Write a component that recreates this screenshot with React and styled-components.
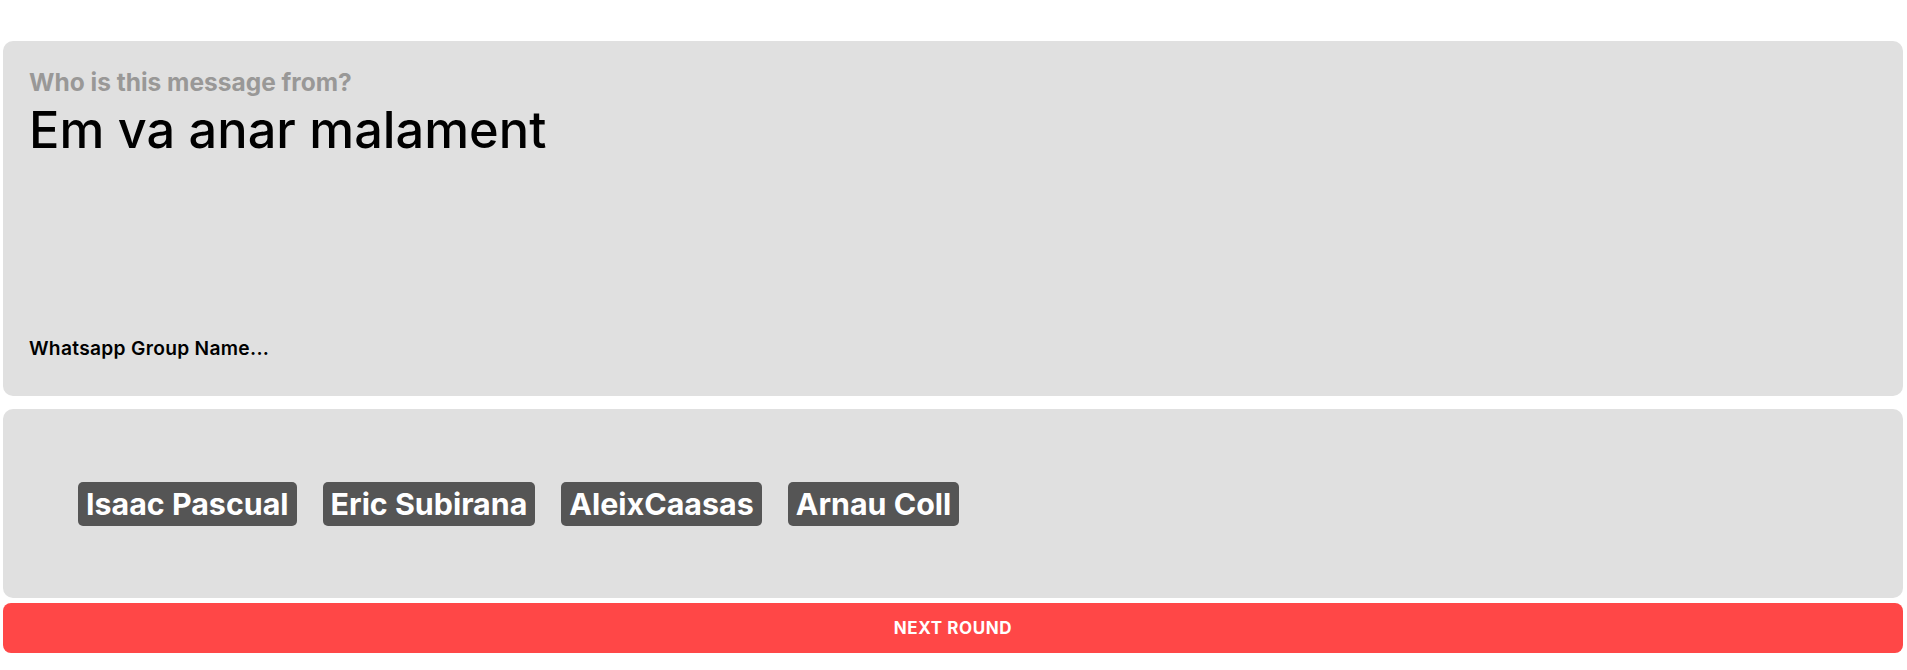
import React from 'react';
import styled, { createGlobalStyle } from "styled-components";

const GlobalStyle = createGlobalStyle`
  * {
    box-sizing: border-box;
  }
  body {
    margin: 0;
    background: #ffffff;
    font-family: Inter, "Noto Sans", sans-serif;
  }
`;

export default function App() {
    const players = ["Isaac Pascual", "Eric Subirana", "AleixCaasas", "Arnau Coll"];

    return (
        <>
            <GlobalStyle />
            <Page>
                <MessageCard>
                    <div>
                        <Question>Who is this message from?</Question>
                        <Message>Em va anar malament</Message>
                    </div>
                    <GroupName>Whatsapp Group Name...</GroupName>
                </MessageCard>
                <PlayersCard>
                    {players.map((name) => (
                        <PlayerTag key={name}>{name}</PlayerTag>
                    ))}
                </PlayersCard>
                <NextButton>NEXT ROUND</NextButton>
            </Page>
        </>
    );
}

const Page = styled.main`
    display: flex;
    flex-direction: column;
    padding: 41px 4px 0 3px;
`;

const MessageCard = styled.section`
    height: 355px;
    padding: 27px 26px 36px;
    display: flex;
    flex-direction: column;
    justify-content: space-between;
    background-color: #e0e0e0;
    border-radius: 10px;
`;

const Question = styled.h3`
    margin: 0;
    font-size: 24.5px;
    line-height: 28px;
    font-weight: 700;
    color: #999897;
`;

const Message = styled.h1`
    margin: 5px 0 0;
    font-size: 50.5px;
    line-height: 58px;
    font-weight: 500;
    color: #000;
`;

const GroupName = styled.p`
    margin: 0;
    font-size: 19.2px;
    line-height: 24px;
    font-weight: 600;
    letter-spacing: 0.3px;
    color: #000;
`;

const PlayersCard = styled.section`
    margin-top: 13px;
    height: 189px;
    padding: 0 75px;
    display: flex;
    align-items: center;
    gap: 26px;
    background-color: #e0e0e0;
    border-radius: 10px;
`;

const PlayerTag = styled.span`
    height: 44px;
    padding: 0 8px;
    display: flex;
    align-items: center;
    font-size: 30.4px;
    font-weight: 700;
    color: #fff;
    background-color: #555555;
    border-radius: 5px;
`;

const NextButton = styled.button`
    margin-top: 5px;
    height: 50px;
    border: none;
    border-radius: 8px;
    background-color: #ff4747;
    color: #fff;
    font-family: Inter, "Noto Sans", sans-serif;
    font-size: 17px;
    font-weight: 700;
    letter-spacing: 0.6px;
    cursor: pointer;
`;
